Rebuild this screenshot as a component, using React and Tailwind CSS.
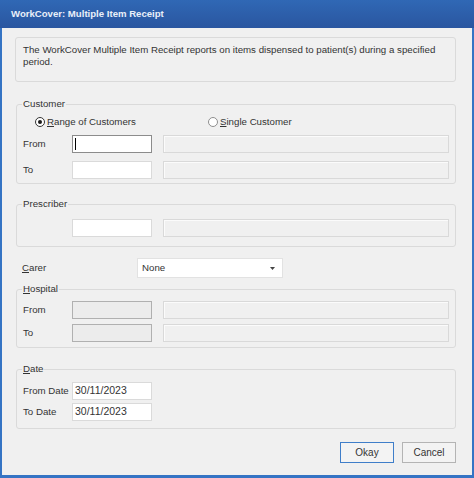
import React from 'react';

// small helpers for the classic win32 look
function Field({ kind = 'white', className = '', children }) {
  const look = {
    focus: 'bg-white border-[#8c8c8c]',
    white: 'bg-white border-[#dadada]',
    disabled: 'bg-[#f0f0f0] border-[#d9d9d9] shadow-[inset_1px_1px_0_#fbfbfb]',
    gray: 'bg-[#ececec] border-[#b0b0b0]',
  }[kind];
  return (
    <div className={`h-[18px] border flex items-center px-[2px] ${look} ${className}`}>
      {children}
    </div>
  );
}

function Group({ label, className = '', children }) {
  return (
    <fieldset className={`border border-[#dadada] rounded-[3px] pl-[5px] pr-[6px] ${className}`}>
      <legend className="px-[1px] leading-[14px]">{label}</legend>
      {children}
    </fieldset>
  );
}

function Radio({ checked }) {
  return (
    <span className={`w-[10px] h-[10px] rounded-full border flex items-center justify-center bg-white ${checked ? 'border-[#333]' : 'border-[#8e8e8e]'}`}>
      {checked && <span className="w-[4px] h-[4px] rounded-full bg-[#1a1a1a]" />}
    </span>
  );
}

function Row({ label, className = '', left, right = 'disabled' }) {
  return (
    <div className={`h-[18px] flex items-center ${className}`}>
      <span className="w-[50px] pl-[1px]">{label}</span>
      <Field kind={left} className="w-[80px]">
        {left === 'focus' && <span className="w-px h-[12px] bg-black" />}
      </Field>
      <Field kind={right} className="flex-1 ml-[11px]" />
    </div>
  );
}

export default function App() {
  return (
    <div className="w-[474px] h-[478px] flex flex-col bg-[#3574c4] font-['Liberation_Sans',Arial,sans-serif] text-[9.7px] text-[#333]">
      <div className="h-[28px] shrink-0 bg-gradient-to-b from-[#3068b5] to-[#2a56a0] pl-[11px] flex items-center text-[9.6px] font-bold text-[#e9eff9]">
        WorkCover: Multiple Item Receipt
      </div>

      <div className="flex-1 mx-[2px] mb-[3px] bg-[#f0f0f0] pl-[14px] pr-[16px] pt-[9px] flex flex-col">
        <div className="h-[45px] -ml-[1px] border border-[#dadada] rounded-[3px] px-[7px] pt-[6px] leading-[12px]">
          The WorkCover Multiple Item Receipt reports on items dispensed to patient(s) during a specified
          <br />
          period.
        </div>

        <Group label="Customer" className="mt-[15px] pb-[4px]">
          <div className="h-[14px] mt-[4px] flex items-center">
            <div className="w-[186px] pl-[13px] flex items-center gap-[2px]">
              <Radio checked />
              <span><u>R</u>ange of Customers</span>
            </div>
            <div className="flex items-center gap-[2px]">
              <Radio />
              <span><u>S</u>ingle Customer</span>
            </div>
          </div>
          <Row label="From" left="focus" className="mt-[6px]" />
          <Row label="To" left="white" className="mt-[8px]" />
        </Group>

        <Group label="Prescriber" className="mt-[13px] pb-[9px]">
          <Row label="" left="white" className="mt-[8px]" />
        </Group>

        <div className="mt-[11px] h-[20px] flex items-center">
          <span className="w-[121px] pl-[6px]"><u>C</u>arer</span>
          <div className="w-[146px] h-[20px] bg-white border border-[#e2e2e2] flex items-center justify-between pl-[4px] pr-[7px]">
            <span>None</span>
            <svg width="5" height="3" viewBox="0 0 5 3"><path d="M0 0h5L2.5 3z" fill="#444" /></svg>
          </div>
        </div>

        <Group label={<span><u>H</u>ospital</span>} className="mt-[4px] pb-[5px]">
          <Row label="From" left="gray" className="mt-[5px]" />
          <Row label="To" left="gray" className="mt-[5px]" />
        </Group>

        <Group label={<span><u>D</u>ate</span>} className="mt-[14px] pb-[7px]">
          <div className="h-[18px] mt-[6px] flex items-center">
            <span className="w-[50px] pl-[1px]">From Date</span>
            <Field kind="white" className="w-[80px] text-[10.5px]">30/11/2023</Field>
          </div>
          <div className="h-[18px] mt-[3px] flex items-center">
            <span className="w-[50px] pl-[1px]">To Date</span>
            <Field kind="white" className="w-[80px] text-[10.5px]">30/11/2023</Field>
          </div>
        </Group>

        <div className="mt-[13px] flex justify-end gap-[8px]">
          <button className="w-[54px] h-[21px] bg-[#f3f3f3] border border-[#3f7ec9] text-[10px]">Okay</button>
          <button className="w-[54px] h-[21px] bg-[#f3f3f3] border border-[#b4b4b4] text-[10px]">Cancel</button>
        </div>
      </div>
    </div>
  );
}
